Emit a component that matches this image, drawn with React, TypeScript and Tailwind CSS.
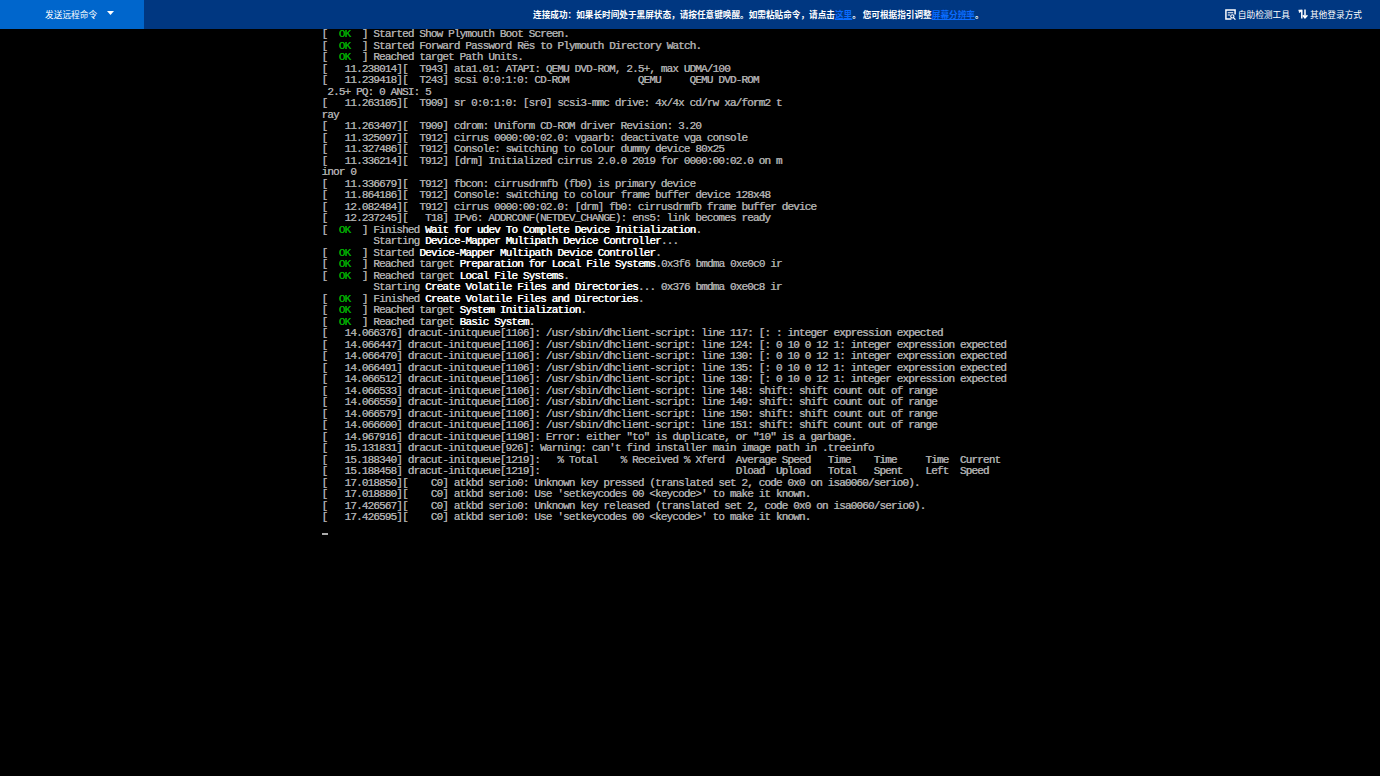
const lines = [
  "[  OK  ] Started Show Plymouth Boot Screen.",
  "[  OK  ] Started Forward Password Rës to Plymouth Directory Watch.",
  "[  OK  ] Reached target Path Units.",
  "[   11.238014][  T943] ata1.01: ATAPI: QEMU DVD-ROM, 2.5+, max UDMA/100",
  "[   11.239418][  T243] scsi 0:0:1:0: CD-ROM            QEMU     QEMU DVD-ROM",
  " 2.5+ PQ: 0 ANSI: 5",
  "[   11.263105][  T909] sr 0:0:1:0: [sr0] scsi3-mmc drive: 4x/4x cd/rw xa/form2 t",
  "ray",
  "[   11.263407][  T909] cdrom: Uniform CD-ROM driver Revision: 3.20",
  "[   11.325097][  T912] cirrus 0000:00:02.0: vgaarb: deactivate vga console",
  "[   11.327486][  T912] Console: switching to colour dummy device 80x25",
  "[   11.336214][  T912] [drm] Initialized cirrus 2.0.0 2019 for 0000:00:02.0 on m",
  "inor 0",
  "[   11.336679][  T912] fbcon: cirrusdrmfb (fb0) is primary device",
  "[   11.864186][  T912] Console: switching to colour frame buffer device 128x48",
  "[   12.082484][  T912] cirrus 0000:00:02.0: [drm] fb0: cirrusdrmfb frame buffer device",
  "[   12.237245][   T18] IPv6: ADDRCONF(NETDEV_CHANGE): ens5: link becomes ready",
  "[  OK  ] Finished **Wait for udev To Complete Device Initialization**.",
  "         Starting **Device-Mapper Multipath Device Controller**...",
  "[  OK  ] Started **Device-Mapper Multipath Device Controller**.",
  "[  OK  ] Reached target **Preparation for Local File Systems**.0x3f6 bmdma 0xe0c0 ir",
  "[  OK  ] Reached target **Local File Systems**.",
  "         Starting **Create Volatile Files and Directories**... 0x376 bmdma 0xe0c8 ir",
  "[  OK  ] Finished **Create Volatile Files and Directories**.",
  "[  OK  ] Reached target **System Initialization**.",
  "[  OK  ] Reached target **Basic System**.",
  "[   14.066376] dracut-initqueue[1106]: /usr/sbin/dhclient-script: line 117: [: : integer expression expected",
  "[   14.066447] dracut-initqueue[1106]: /usr/sbin/dhclient-script: line 124: [: 0 10 0 12 1: integer expression expected",
  "[   14.066470] dracut-initqueue[1106]: /usr/sbin/dhclient-script: line 130: [: 0 10 0 12 1: integer expression expected",
  "[   14.066491] dracut-initqueue[1106]: /usr/sbin/dhclient-script: line 135: [: 0 10 0 12 1: integer expression expected",
  "[   14.066512] dracut-initqueue[1106]: /usr/sbin/dhclient-script: line 139: [: 0 10 0 12 1: integer expression expected",
  "[   14.066533] dracut-initqueue[1106]: /usr/sbin/dhclient-script: line 148: shift: shift count out of range",
  "[   14.066559] dracut-initqueue[1106]: /usr/sbin/dhclient-script: line 149: shift: shift count out of range",
  "[   14.066579] dracut-initqueue[1106]: /usr/sbin/dhclient-script: line 150: shift: shift count out of range",
  "[   14.066600] dracut-initqueue[1106]: /usr/sbin/dhclient-script: line 151: shift: shift count out of range",
  "[   14.967916] dracut-initqueue[1198]: Error: either \"to\" is duplicate, or \"10\" is a garbage.",
  "[   15.131831] dracut-initqueue[926]: Warning: can't find installer main image path in .treeinfo",
  "[   15.188340] dracut-initqueue[1219]:   % Total    % Received % Xferd  Average Speed   Time    Time     Time  Current",
  "[   15.188458] dracut-initqueue[1219]:                                  Dload  Upload   Total   Spent    Left  Speed",
  "[   17.018850][    C0] atkbd serio0: Unknown key pressed (translated set 2, code 0x0 on isa0060/serio0).",
  "[   17.018880][    C0] atkbd serio0: Use 'setkeycodes 00 <keycode>' to make it known.",
  "[   17.426567][    C0] atkbd serio0: Unknown key released (translated set 2, code 0x0 on isa0060/serio0).",
  "[   17.426595][    C0] atkbd serio0: Use 'setkeycodes 00 <keycode>' to make it known.",
];

function ConsoleLine({ text }: { text: string }) {
  const ok = text.startsWith("[  OK  ]");
  const rest = ok ? text.slice(8) : text;
  const parts = rest.split("**");
  return (
    <div className="h-[11.5px] leading-[11.5px] whitespace-pre">
      {ok && (
        <>
          [  <span className="text-[#00aa00]">OK</span>  ]
        </>
      )}
      {parts.map((part, i) =>
        i % 2 === 1 ? (
          <span key={i} className="text-white [text-shadow:0.5px_0_0_#ffffff]">
            {part}
          </span>
        ) : (
          <span key={i}>{part}</span>
        )
      )}
    </div>
  );
}

function ToolIcon() {
  return (
    <svg viewBox="0 0 12 12" className="w-[11px] h-[11px] ml-[1px]" fill="none" stroke="white">
      <path d="M11 6V1H1v10h6" strokeWidth="1.6" />
      <path d="M3 4h6M3 6.5h2.5" strokeWidth="1.1" />
      <circle cx="8" cy="8" r="1.8" strokeWidth="1.2" />
      <path d="M9.2 9.4l2.2 2.2" strokeWidth="1.4" />
    </svg>
  );
}

function SwitchIcon() {
  return (
    <svg viewBox="0 0 10 10" className="w-[10px] h-[10px]" fill="none" stroke="white" strokeWidth="1.5">
      <path d="M3.8 9.5V1.5H0.5M3.6 0.8L1.2 3.4" />
      <path d="M7 0.5v8M4.8 6.2L7 8.8l2.4-2.6" />
    </svg>
  );
}

export default function App() {
  return (
    <div className="h-[776px] bg-black overflow-hidden">
      <header className="h-[29px] flex items-center bg-[#003781] text-white text-[8.7px] font-['Noto_Sans_CJK_SC',sans-serif]">
        <div className="w-[144px] h-full bg-[#0066cc] flex items-center pl-[45px]">
          <span>发送远程命令</span>
          <svg viewBox="0 0 7 4" className="w-[7px] h-[4px] ml-[10px] mb-[3px]" fill="white">
            <path d="M0 0h7L3.5 4z" />
          </svg>
        </div>
        <div className="ml-[389px] font-bold text-[8.65px] whitespace-pre">
          连接成功：如果长时间处于黑屏状态，请按任意键唤醒。如需粘贴命令，请点击
          <a className="text-[#0a6cff] underline">这里</a>。 您可根据指引调整
          <a className="text-[#0a6cff] underline">屏幕分辨率</a>。
        </div>
        <div className="ml-auto pr-[18px] flex items-center">
          <ToolIcon />
          <span className="ml-[2px]">自助检测工具</span>
          <span className="ml-[8px]">
            <SwitchIcon />
          </span>
          <span className="ml-[2px]">其他登录方式</span>
        </div>
      </header>
      <main className="pl-[321.5px] text-[#aaaaaa] text-[11px] tracking-[-0.85px] font-['Liberation_Mono',monospace] [text-shadow:0.3px_0_0_currentColor]">
        {lines.map((line, i) => (
          <ConsoleLine key={i} text={line} />
        ))}
        <div className="w-[6px] h-[2px] mt-[9px] bg-[#aaaaaa]" />
      </main>
    </div>
  );
}
